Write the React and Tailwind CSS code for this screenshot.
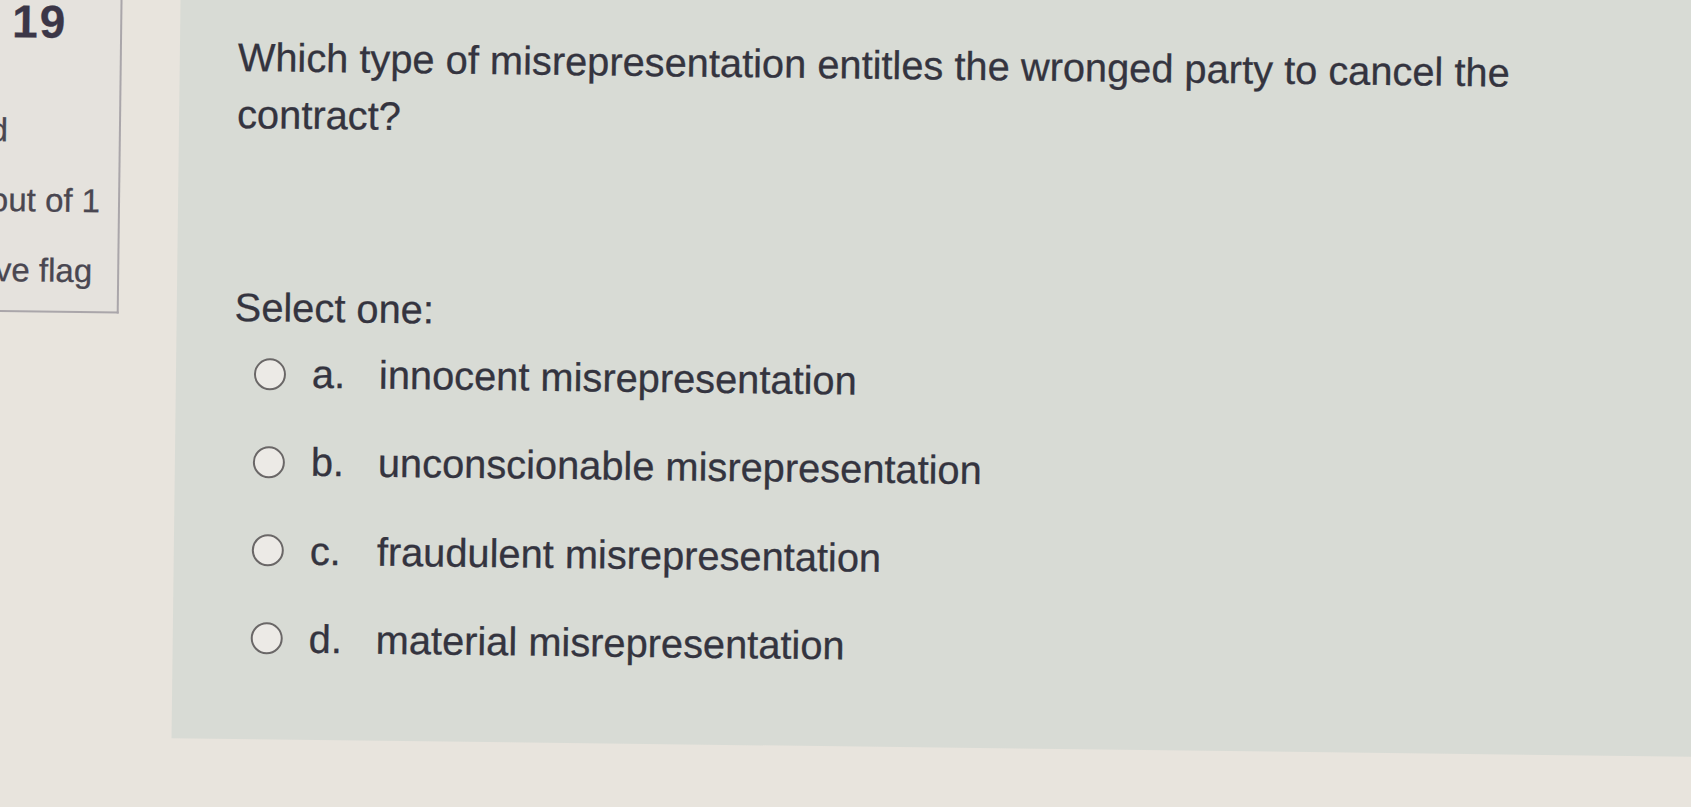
export default function App() {
  const options = [
    ["a.", "innocent misrepresentation"],
    ["b.", "unconscionable misrepresentation"],
    ["c.", "fraudulent misrepresentation"],
    ["d.", "material misrepresentation"],
  ];
  return (
    <div className="w-screen h-screen overflow-hidden bg-[#e8e4dd] font-['Liberation_Sans',Arial,sans-serif]">
      <div className="-mt-[40px] w-[1800px] origin-top-left rotate-[0.7deg] flex items-start">
        {/* left info box */}
        <div className="w-[123px] shrink-0 border-r-2 border-b-2 border-[#aaa6aa] bg-[#e5e2dd] pt-[36px] pb-[5px] text-[#4a4751] [-webkit-text-stroke:0.3px_#4a4751]">
          <div className="flex justify-end whitespace-nowrap pr-[53px] text-[46px] leading-[50px] tracking-[2px] text-[#3b3647]">
            <span className="font-normal">Question&nbsp;</span>
            <span className="font-bold">19</span>
          </div>
          <div className="mt-[49px] flex justify-end whitespace-nowrap pr-[111px] text-[33px] leading-[70px]">
            Not yet answered
          </div>
          <div className="flex justify-end whitespace-nowrap pr-[18px] text-[33px] leading-[70px]">
            Marked out of 1
          </div>
          <div className="flex justify-end whitespace-nowrap pr-[25px] text-[33px] leading-[70px]">
            Remove flag
          </div>
        </div>

        {/* question panel */}
        <div className="ml-[58px] flex-1 h-[776px] bg-[#d8dbd5] pt-[66px] pl-[58px] text-[#34343f] text-[39.8px] leading-[57px] [-webkit-text-stroke:0.3px_#34343f]">
          <p className="max-w-[1320px]">
            Which type of misrepresentation entitles the wronged party to cancel the contract?
          </p>
          <p className="mt-[136px]">Select one:</p>
          <div className="mt-[9px] pl-[20px] flex flex-col gap-[31.3px]">
            {options.map(([k, t]) => (
              <label key={k} className="flex items-center">
                <span className="w-8 h-8 shrink-0 rounded-full border-[2.5px] border-[#6a6767] bg-[#eceae6]" />
                <span className="ml-[26px] w-[67px] shrink-0">{k}</span>
                <span className="whitespace-nowrap">{t}</span>
              </label>
            ))}
          </div>
        </div>
      </div>
    </div>
  );
}
